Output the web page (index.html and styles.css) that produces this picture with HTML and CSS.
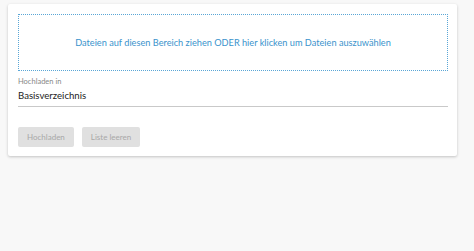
FILE: index.html
```html
<!DOCTYPE html>
<html lang="de">
<head>
<meta charset="utf-8">
<title>Upload</title>
<link rel="stylesheet" href="styles.css">
</head>
<body>
<div class="card">
  <div class="dropzone">Dateien auf diesen Bereich ziehen ODER hier klicken um Dateien auszuwählen</div>
  <div class="field">
    <div class="label">Hochladen in</div>
    <div class="value">Basisverzeichnis</div>
  </div>
  <div class="actions">
    <button class="btn" disabled>Hochladen</button>
    <button class="btn" disabled>Liste leeren</button>
  </div>
</div>
</body>
</html>
```
FILE: styles.css
```css
html, body {
  margin: 0;
  background: #f8f8f8;
  height: 100%;
}
body {
  padding: 4px 17px 0 8px;
  box-sizing: border-box;
  font-family: Lato, "Open Sans", sans-serif;
}
.card {
  background: #fff;
  border-radius: 2px;
  box-shadow: 0 1px 3px rgba(0,0,0,0.22);
  padding: 10px 9px 9px 10px;
}
.dropzone {
  height: 57px;
  box-sizing: border-box;
  border: 1px dotted #5aa6d6;
  color: #3a93cc;
  font-size: 9.2px;
  display: flex;
  align-items: center;
  justify-content: center;
}
.field {
  margin-top: 6px;
  border-bottom: 1px solid #c9c9c9;
  padding-bottom: 3px;
}
.label {
  font-size: 7.5px;
  color: #888;
  line-height: 10px;
}
.value {
  font-size: 9.6px;
  color: #222;
  line-height: 14px;
  margin-top: 2px;
}
.actions {
  margin-top: 20px;
  display: flex;
  gap: 8px;
}
.btn {
  font-family: inherit;
  font-size: 8px;
  height: 20px;
  padding: 0 9px;
  border: none;
  border-radius: 2px;
  background: #e0e0e0;
  color: #a8a8a8;
}
```
